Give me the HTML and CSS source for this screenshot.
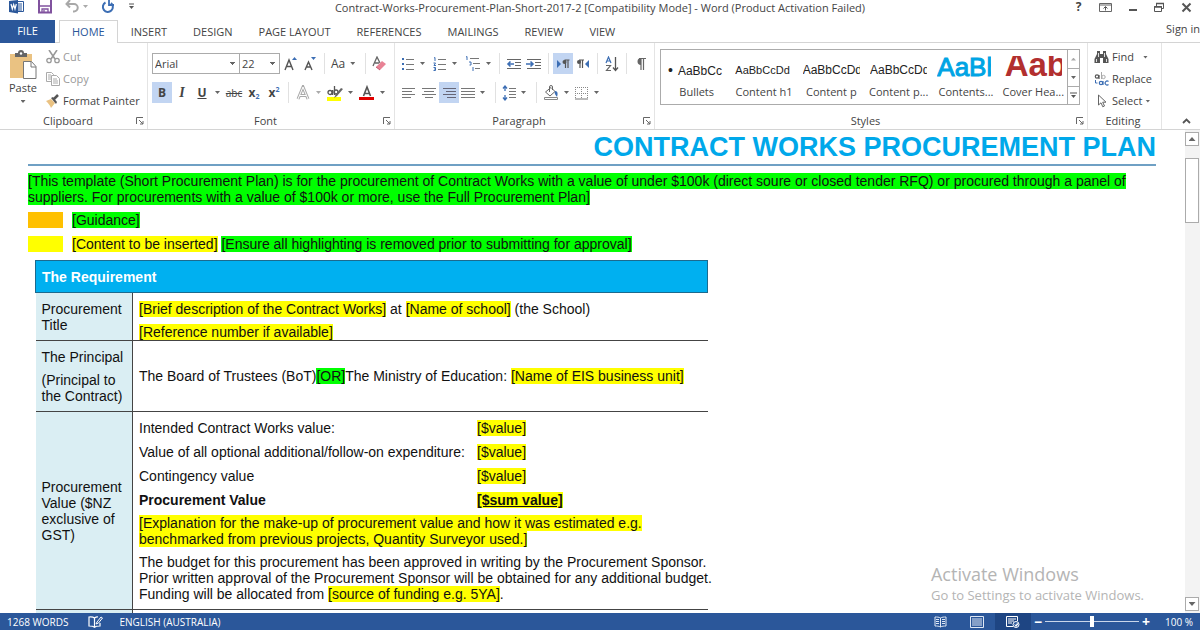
FILE: index.html
```html
<!DOCTYPE html>
<html lang="en">
<head>
<meta charset="UTF-8">
<meta name="viewport" content="width=device-width, initial-scale=1.0">
<title>Contract-Works-Procurement-Plan-Short-2017-2 - Word</title>
<link rel="stylesheet" href="styles.css">
</head>
<body>

<header class="titlebar">
  <div class="quick">
    <svg class="app-icon" width="16" height="14" viewBox="0 0 16 14"><path d="M8 1.500h6.500v10H8" fill="#fff" stroke="#2b579a"/><path d="M9 4h4M9 6h4M9 8h4M9 10h4" stroke="#2b579a"/><path d="M0 1l9-1v13.500L0 12z" fill="#2b579a"/><path d="M2 4l1.300 5L4.700 4.500 6 9l1.300-5" fill="none" stroke="#fff" stroke-width="1.200"/></svg>
    <button aria-label="Save"><svg width="14" height="14" viewBox="0 0 14 14"><path d="M1 0v12.500h12V0" fill="none" stroke="#80529e" stroke-width="2"/><path d="M2 6h10" stroke="#80529e" stroke-width="1.500"/><path d="M4 13V9h6v4M6 10v3" fill="none" stroke="#80529e" stroke-width="1.300"/></svg></button>
    <button class="has-caret off" aria-label="Undo"><svg width="14" height="14" viewBox="0 0 14 14"><path d="M5 0L1.500 4 5 7.500M2 4h7a3.500 3.500 0 0 1 0 7.500H8" fill="none" stroke="#a8a8a8" stroke-width="2"/></svg><i class="caret"></i></button>
    <button aria-label="Repeat"><svg width="14" height="14" viewBox="0 0 14 14"><path d="M4.500 2.500a5 5 0 1 0 5.500.500" fill="none" stroke="#3c6eb4" stroke-width="2"/><path d="M8 0v5h5" fill="none" stroke="#3c6eb4" stroke-width="1.800"/></svg></button>
    <button aria-label="Customize"><svg width="7" height="7" viewBox="0 0 7 7"><path d="M1 1h5" stroke="#555"/><path d="M1 3h5L3.500 6z" fill="#555"/></svg></button>
  </div>
  <h1 class="window-title">Contract-Works-Procurement-Plan-Short-2017-2 [Compatibility Mode] - Word (Product Activation Failed)</h1>
  <div class="window-buttons">
    <button class="help" aria-label="Help">?</button>
    <button aria-label="Ribbon options"><svg width="13" height="11" viewBox="0 0 13 11"><path d="M.5 1.500h12v8H.5zM.5 3h12" fill="none" stroke="#666"/><path d="M6.500 8.500V5M4.500 6.500l2-2 2 2" fill="none" stroke="#555"/></svg></button>
    <button aria-label="Minimize"><svg width="10" height="11" viewBox="0 0 10 11"><path d="M1 8h8" stroke="#555" stroke-width="2"/></svg></button>
    <button aria-label="Restore"><svg width="11" height="11" viewBox="0 0 11 11"><path d="M2.500 4V1.500h7v5H8M.5 4.500h7v5h-7z" fill="none" stroke="#555"/><path d="M2 1.500h8M0 5h8" stroke="#555" stroke-width="1.500"/></svg></button>
    <button aria-label="Close"><svg width="11" height="11" viewBox="0 0 11 11"><path d="M1.500 1.500l8 8M9.500 1.500l-8 8" stroke="#555" stroke-width="2"/></svg></button>
  </div>
</header>

<nav class="tabs">
  <a class="file" href="#file">FILE</a>
  <a class="tab active" href="#home">HOME</a>
  <a class="tab" href="#insert">INSERT</a>
  <a class="tab" href="#design">DESIGN</a>
  <a class="tab" href="#layout">PAGE LAYOUT</a>
  <a class="tab" href="#references">REFERENCES</a>
  <a class="tab" href="#mailings">MAILINGS</a>
  <a class="tab" href="#review">REVIEW</a>
  <a class="tab" href="#view">VIEW</a>
  <a class="signin" href="#signin">Sign in</a>
</nav>

<section class="ribbon">
  <div class="group">
    <div class="clipboard">
      <button class="paste">
        <svg width="28" height="30" viewBox="0 0 28 30"><path d="M1 4h22v24H1z" fill="#eac282"/><path d="M6 3h3a3 3 0 0 1 6 0h3v4H6z" fill="#666"/><circle cx="12" cy="3.500" r="1.200" fill="#fff"/><path d="M14.500 11.500h8l4.500 5v12H14.500z" fill="#fff" stroke="#777"/><path d="M22 12v5h5" fill="none" stroke="#777"/></svg>
        <span>Paste</span>
        <i class="caret"></i>
      </button>
      <div class="stack">
        <button class="cmd off"><svg width="14" height="14" viewBox="0 0 14 14"><path d="M3 0l6 9M11 0L5 9" stroke="#999" stroke-width="1.600"/><circle cx="3" cy="10.500" r="2.200" fill="none" stroke="#999" stroke-width="1.300"/><circle cx="11" cy="10.500" r="2.200" fill="none" stroke="#999" stroke-width="1.300"/></svg>Cut</button>
        <button class="cmd off"><svg width="14" height="14" viewBox="0 0 14 14"><path d="M.5.500h5l2 2v7h-7zM2 3h3M2 5h4M2 7h4" fill="#fff" stroke="#aaa"/><path d="M5.500 3.500h5l3 3v7h-8zM7 7h4M7 9h5M7 11h5" fill="#fff" stroke="#aaa"/></svg>Copy</button>
        <button class="cmd"><svg width="14" height="14" viewBox="0 0 14 14"><path d="M0 7l5-2 4 4-4 5c-1-3-3-5-5-7z" fill="#eac282"/><path d="M5 4l2-1 4 5-1 2z" fill="#555"/><path d="M8 5l4-4" stroke="#555" stroke-width="2.500"/></svg>Format Painter</button>
      </div>
    </div>
    <footer class="group-name"><span>Clipboard</span><svg class="launcher" width="8" height="8" viewBox="0 0 8 8"><path d="M.5 7V.500H7M3 3l4 4M7 4v3H4" fill="none" stroke="#666"/></svg></footer>
  </div>

  <div class="group">
    <div class="tools">
      <div class="row">
        <select class="font-name" aria-label="Font"><option>Arial</option></select>
        <select class="font-size" aria-label="Font size"><option>22</option></select>
        <button class="tool" aria-label="Grow font"><svg width="16" height="16" viewBox="0 0 16 16"><path d="M3 14L7 4l4 10M4.500 10.500h5" fill="none" stroke="#555" stroke-width="1.400"/><path d="M10 4h5l-2.500-3z" fill="#3c6eb4"/></svg></button>
        <button class="tool" aria-label="Shrink font"><svg width="16" height="16" viewBox="0 0 16 16"><path d="M3 14l3.500-8 3.500 8M4.500 11h4" fill="none" stroke="#555" stroke-width="1.400"/><path d="M9 1h5l-2.500 3z" fill="#3c6eb4"/></svg></button>
        <i class="sep"></i>
        <button class="tool drop" aria-label="Change case"><span class="aa">Aa</span><i class="caret"></i></button>
        <i class="sep"></i>
        <button class="tool" aria-label="Clear formatting"><svg width="16" height="16" viewBox="0 0 16 16"><path d="M1 10L5 1l3 6M3 7h4" fill="none" stroke="#666" stroke-width="1.300"/><path d="M4 11l6-6 4 3-6 6z" fill="#e88295"/><path d="M4 11l4 3" stroke="#c65a70"/></svg></button>
      </div>
      <div class="row">
        <button class="tool on bold">B</button>
        <button class="tool italic">I</button>
        <button class="tool drop under"><span>U</span><i class="caret"></i></button>
        <button class="tool strike">abc</button>
        <button class="tool script">x<sub>2</sub></button>
        <button class="tool script">x<sup>2</sup></button>
        <i class="sep"></i>
        <button class="tool drop off" aria-label="Text effects"><svg width="16" height="16" viewBox="0 0 16 16"><path d="M3 14L8 2l5 12M5 10.500h6" fill="none" stroke="#aaa" stroke-width="3"/><path d="M3 14L8 2l5 12M5 10.500h6" fill="none" stroke="#fff"/></svg><i class="caret"></i></button>
        <button class="tool drop" aria-label="Highlight"><svg width="16" height="16" viewBox="0 0 16 16"><path d="M0 12h14v4H0z" fill="#ff0"/><circle cx="3" cy="7.500" r="2" fill="none" stroke="#555" stroke-width="1.300"/><path d="M5.500 5v5M7.500 1v9" stroke="#555" stroke-width="1.300"/><circle cx="9" cy="7" r="2" fill="none" stroke="#555" stroke-width="1.300"/><path d="M7 13l2-4 5-6 2 1-6 7z" fill="#666"/></svg><i class="caret"></i></button>
        <button class="tool drop" aria-label="Font colour"><svg width="16" height="16" viewBox="0 0 16 16"><path d="M4.500 11L8 2l3.500 9M6 8.500h4" fill="none" stroke="#555" stroke-width="1.600"/><path d="M0 12h15v3H0z" fill="#e00000"/></svg><i class="caret"></i></button>
      </div>
    </div>
    <footer class="group-name"><span>Font</span><svg class="launcher" width="8" height="8" viewBox="0 0 8 8"><path d="M.5 7V.500H7M3 3l4 4M7 4v3H4" fill="none" stroke="#666"/></svg></footer>
  </div>

  <div class="group">
    <div class="tools">
      <div class="row">
        <button class="tool drop" aria-label="Bullets"><svg width="14" height="14" viewBox="0 0 14 14"><path d="M1 2h2M1 7h2M1 12h2" stroke="#3c6eb4" stroke-width="2"/><path d="M5 2.500h8M5 7.500h8M5 12.500h8" stroke="#777"/></svg><i class="caret"></i></button>
        <button class="tool drop" aria-label="Numbering"><svg width="14" height="14" viewBox="0 0 14 14"><path d="M1 1l1-.5V4M.5 6h2L1 8.500h2M.5 10.500h2v3h-2M1 12h1.500" fill="none" stroke="#3c6eb4"/><path d="M5 2.500h8M5 7.500h8M5 12.500h8" stroke="#777"/></svg><i class="caret"></i></button>
        <button class="tool drop" aria-label="Multilevel list"><svg width="16" height="16" viewBox="0 0 16 16"><path d="M1 1l1-.5V4M4 6h2v3H4.500M8 11v4" fill="none" stroke="#3c6eb4"/><path d="M5 2.500h9M8 7.500h7M10 12.500h5" stroke="#777"/></svg><i class="caret"></i></button>
        <i class="sep"></i>
        <button class="tool" aria-label="Decrease indent"><svg width="16" height="14" viewBox="0 0 16 14"><path d="M1 2.500h14M9 5.500h6M9 8.500h6M1 11.500h14" stroke="#666"/><path d="M8 7H2M4.500 4.500L2 7l2.500 2.500" fill="none" stroke="#3c6eb4" stroke-width="1.600"/></svg></button>
        <button class="tool" aria-label="Increase indent"><svg width="16" height="14" viewBox="0 0 16 14"><path d="M1 2.500h14M9 5.500h6M9 8.500h6M1 11.500h14" stroke="#666"/><path d="M0 7h7M4.500 4.500L7 7 4.500 9.500" fill="none" stroke="#3c6eb4" stroke-width="1.600"/></svg></button>
        <i class="sep"></i>
        <button class="tool on" aria-label="Left to right"><svg width="14" height="14" viewBox="0 0 14 14"><path d="M1 3l4 4-4 4z" fill="#3c6eb4"/><path d="M9.500 11V3M12 11V3M8.500 3h5" fill="none" stroke="#555" stroke-width="1.200"/><circle cx="8.500" cy="5" r="2" fill="#555"/></svg></button>
        <button class="tool" aria-label="Right to left"><svg width="14" height="14" viewBox="0 0 14 14"><path d="M13 3L9 7l4 4z" fill="#3c6eb4"/><path d="M4 11V3M6.500 11V3M3 3h5" fill="none" stroke="#555" stroke-width="1.200"/><circle cx="3" cy="5" r="2" fill="#555"/></svg></button>
        <i class="sep"></i>
        <button class="tool" aria-label="Sort"><svg width="14" height="16" viewBox="0 0 14 16"><path d="M1 7l2.500-6L6 7M2 5h3" fill="none" stroke="#3c6eb4" stroke-width="1.200"/><path d="M1 9.500h4.500L1.500 14.500H6" fill="none" stroke="#666" stroke-width="1.200"/><path d="M10.500 1v13M8 11.500l2.500 3 2.500-3" fill="none" stroke="#555" stroke-width="1.300"/></svg></button>
        <i class="sep"></i>
        <button class="tool" aria-label="Show marks"><svg width="12" height="14" viewBox="0 0 12 14"><path d="M6 13V1.500M8.500 13V1.500M4 1.500h7" fill="none" stroke="#666" stroke-width="1.200"/><path d="M6 1a3 3 0 0 0 0 7z" fill="#666"/></svg></button>
      </div>
      <div class="row">
        <button class="tool" aria-label="Align left"><svg width="14" height="14" viewBox="0 0 14 14"><path d="M0 2.500h13M0 5.500h10M0 8.500h13M0 11.500h9" stroke="#777"/></svg></button>
        <button class="tool" aria-label="Center"><svg width="14" height="14" viewBox="0 0 14 14"><path d="M0 2.500h14M2 5.500h10M0 8.500h14M3 11.500h8" stroke="#777"/></svg></button>
        <button class="tool on" aria-label="Align right"><svg width="14" height="14" viewBox="0 0 14 14"><path d="M1 2.500h13M4 5.500h10M1 8.500h13M5 11.500h9" stroke="#667"/></svg></button>
        <button class="tool drop" aria-label="Justify"><svg width="14" height="14" viewBox="0 0 14 14"><path d="M0 2.500h14M0 5.500h14M0 8.500h14M0 11.500h14" stroke="#777"/></svg><i class="caret"></i></button>
        <i class="sep"></i>
        <button class="tool drop" aria-label="Line spacing"><svg width="14" height="16" viewBox="0 0 14 16"><path d="M3 1v5M1 3.500L3 1l2 2.500M3 10v5M1 12.500L3 15l2-2.500" fill="none" stroke="#3c6eb4" stroke-width="1.300"/><path d="M7 3.500h7M7 6.500h7M7 9.500h7M7 12.500h7" stroke="#777"/></svg><i class="caret"></i></button>
        <i class="sep"></i>
        <button class="tool drop" aria-label="Shading"><svg width="16" height="16" viewBox="0 0 16 16"><path d="M2.500 7L8 2.500l4 4L7 11z" fill="#fff" stroke="#666"/><path d="M6.500 7V2a1.500 1.500 0 0 1 3 0v3" fill="none" stroke="#666"/><path d="M12 6c3 0 3 3 2 6-1-2-3-3-2-6z" fill="#3c6eb4"/><path d="M1.500 12.500h13v2h-13z" fill="#fff" stroke="#888"/></svg><i class="caret"></i></button>
        <button class="tool drop" aria-label="Borders"><svg width="14" height="14" viewBox="0 0 14 14"><path d="M0 1.500h13M.5 1v12M6.500 1v12M12.500 1v12M0 7.500h13" fill="none" stroke="#888" stroke-dasharray="1 1"/><path d="M0 13h13" stroke="#777"/></svg><i class="caret"></i></button>
      </div>
    </div>
    <footer class="group-name"><span>Paragraph</span><svg class="launcher" width="8" height="8" viewBox="0 0 8 8"><path d="M.5 7V.500H7M3 3l4 4M7 4v3H4" fill="none" stroke="#666"/></svg></footer>
  </div>

  <div class="group">
    <div class="gallery">
      <button class="style"><span class="sample bullet">AaBbCc</span><span>Bullets</span></button>
      <button class="style"><span class="sample small">AaBbCcDd</span><span>Content h1</span></button>
      <button class="style"><span class="sample">AaBbCcDd</span><span>Content p</span></button>
      <button class="style"><span class="sample">AaBbCcDd</span><span>Content p...</span></button>
      <button class="style"><span class="sample contents">AaBb</span><span>Contents...</span></button>
      <button class="style"><span class="sample cover">Aab</span><span>Cover Hea...</span></button>
      <div class="gallery-nav">
        <button class="off" aria-label="Up"><i class="caret up"></i></button>
        <button aria-label="Down"><i class="caret"></i></button>
        <button aria-label="More"><svg width="7" height="7" viewBox="0 0 7 7"><path d="M0 1h7" stroke="#555"/><path d="M1 3h5L3.500 6z" fill="#555"/></svg></button>
      </div>
    </div>
    <footer class="group-name"><span>Styles</span><svg class="launcher" width="8" height="8" viewBox="0 0 8 8"><path d="M.5 7V.500H7M3 3l4 4M7 4v3H4" fill="none" stroke="#666"/></svg></footer>
  </div>

  <div class="group">
    <div class="stack editing">
      <button class="cmd"><svg width="15" height="14" viewBox="0 0 15 14"><path d="M3 1h3v3h3V1h3v3l2.500 5v4H9V8H6v5H.5V9L3 4z" fill="#555"/><path d="M2.500 9v3M12.500 9v3M4.500 3v4M10.500 3v4" stroke="#ddd"/></svg>Find<i class="caret far"></i></button>
      <button class="cmd"><svg width="15" height="14" viewBox="0 0 15 14"><circle cx="3" cy="4.500" r="1.700" fill="none" stroke="#555" stroke-width="1.200"/><path d="M5 3v4" stroke="#555" stroke-width="1.200"/><path d="M7.500 0v7" stroke="#aaa"/><circle cx="9.500" cy="5" r="1.700" fill="none" stroke="#aaa"/><path d="M1.500 8v3h2" fill="none" stroke="#3c6eb4"/><circle cx="7" cy="11" r="1.700" fill="none" stroke="#3c6eb4" stroke-width="1.200"/><path d="M9 9v4M14.500 9.500a2 2 0 1 0 0 3" fill="none" stroke="#3c6eb4" stroke-width="1.200"/></svg>Replace</button>
      <button class="cmd"><svg width="15" height="14" viewBox="0 0 15 14"><path d="M4.500 1v10l2.500-2.200 1.800 4 1.700-.8-1.800-3.800H12z" fill="#fff" stroke="#666"/></svg>Select<i class="caret"></i></button>
    </div>
    <footer class="group-name"><span>Editing</span></footer>
  </div>

  <button class="collapse" aria-label="Collapse ribbon"><svg width="9" height="6" viewBox="0 0 9 6"><path d="M1 5l3.500-3.500L8 5" fill="none" stroke="#555" stroke-width="1.800"/></svg></button>
</section>

<main class="workspace">
  <article class="page">
    <h2>CONTRACT WORKS PROCUREMENT PLAN</h2>
    <p class="intro"><mark class="green">[This template (Short Procurement Plan) is for the procurement of Contract Works with a value of under $100k (direct soure or closed tender RFQ) or procured through a panel of suppliers. For procurements with a value of $100k or more, use the Full Procurement Plan]</mark></p>
    <p class="key"><i class="swatch orange"></i><mark class="green">[Guidance]</mark></p>
    <p class="key"><i class="swatch"></i><span><mark>[Content to be inserted]</mark> <mark class="green">[Ensure all highlighting is removed prior to submitting for approval]</mark></span></p>

    <table class="plan">
      <colgroup>
        <col class="label-col">
        <col>
      </colgroup>
      <thead>
        <tr><th colspan="2">The Requirement</th></tr>
      </thead>
      <tbody>
        <tr>
          <th scope="row" class="top">Procurement Title</th>
          <td>
            <p><mark>[Brief description of the Contract Works]</mark> at <mark>[Name of school]</mark> (the School)</p>
            <p><mark>[Reference number if available]</mark></p>
          </td>
        </tr>
        <tr>
          <th scope="row"><p>The Principal</p><p>(Principal to the Contract)</p></th>
          <td class="middle">The Board of Trustees (BoT)<mark class="green">[OR]</mark>The Ministry of Education: <mark>[Name of EIS business unit]</mark></td>
        </tr>
        <tr>
          <th scope="row">Procurement Value ($NZ exclusive of GST)</th>
          <td class="roomy">
            <dl class="values">
              <dt>Intended Contract Works value:</dt><dd><mark>[$value]</mark></dd>
              <dt>Value of all optional additional/follow-on expenditure:</dt><dd><mark>[$value]</mark></dd>
              <dt>Contingency value</dt><dd><mark>[$value]</mark></dd>
              <dt class="total">Procurement Value</dt><dd class="total"><mark>[$sum value]</mark></dd>
            </dl>
            <p><mark>[Explanation for the make-up of procurement value and how it was estimated e.g.<br>benchmarked from previous projects, Quantity Surveyor used.]</mark></p>
            <p class="budget">The budget for this procurement has been approved in writing by the Procurement Sponsor.<br>Prior written approval of the Procurement Sponsor will be obtained for any additional budget.<br>Funding will be allocated from <mark>[source of funding e.g. 5YA]</mark>.</p>
          </td>
        </tr>
        <tr><th scope="row"></th><td></td></tr>
      </tbody>
    </table>
  </article>

  <div class="scrollbar">
    <button aria-label="Scroll up"><i class="caret up"></i></button>
    <div class="thumb"></div>
    <button aria-label="Scroll down"><i class="caret"></i></button>
  </div>

  <div class="activate">
    <strong>Activate Windows</strong>
    <span>Go to Settings to activate Windows.</span>
  </div>
</main>

<footer class="statusbar">
  <span>1268 WORDS</span>
  <svg width="15" height="12" viewBox="0 0 15 12"><path d="M6.500 2C5 .8 3 .8 1 1v9c2 0 4 0 5.500 1.200C8 10 10 10 12 10V7M6.500 2v9M6.500 2C8 1 9 .8 10 1" fill="none" stroke="#fff" stroke-width="1.200"/><path d="M8 8l1-2 4-5 1.500 1-4 5z" fill="none" stroke="#fff"/></svg>
  <span>ENGLISH (AUSTRALIA)</span>
  <div class="views">
    <button aria-label="Read mode"><svg width="13" height="12" viewBox="0 0 13 12"><path d="M6.500 2C5 1 3 1 1 1v9c2 0 4 0 5.500 1C8 10 10 10 12 10V1c-2 0-4 0-5.500 1zM6.500 2v9M2 3.500h3M2 5.500h3M2 7.500h3M8 3.500h3M8 5.500h3M8 7.500h3" fill="none" stroke="#dfe8f5"/></svg></button>
    <button aria-label="Print layout"><svg width="14" height="12" viewBox="0 0 14 12"><path d="M.5.500h13v11H.5zM2 3h10M2 5h10M2 7h10M2 9h10" fill="none" stroke="#dfe8f5"/></svg></button>
    <button class="current" aria-label="Web layout"><svg width="14" height="12" viewBox="0 0 14 12"><path d="M7 10.500H.5V.500h11V5M2 3h8M2 5h6M2 7h4" fill="none" stroke="#fff"/><circle cx="10" cy="8.500" r="3" fill="#2b579a" stroke="#fff"/><path d="M8 8l2 1 1-2 1.500 1L10 11z" fill="#fff"/></svg></button>
  </div>
  <div class="zoom">
    <button aria-label="Zoom out">−</button>
    <input type="range" min="0" max="100" value="50" aria-label="Zoom">
    <button aria-label="Zoom in">+</button>
  </div>
  <span class="percent">100 %</span>
</footer>

</body>
</html>
```
FILE: styles.css
```css
* {
    box-sizing: border-box;
}

body {
    margin: 0;
    height: 100vh;
    display: flex;
    flex-direction: column;
    overflow: hidden;
    background-color: #fff;
    color: #444;
    font-family: "Open Sans", "Noto Sans", sans-serif;
    font-size: 11px;
    line-height: 16px;
}

button {
    display: flex;
    align-items: center;
    justify-content: center;
    margin: 0;
    padding: 0;
    border: none;
    background: none;
    color: inherit;
    font: inherit;
}

a {
    color: inherit;
    text-decoration: none;
}

p, dl, dd {
    margin: 0;
}

svg {
    flex: none;
}

.caret {
    flex: none;
    width: 5px;
    height: 3px;
    background-color: #666;
    clip-path: polygon(0 0, 100% 0, 50% 100%);
}

.caret.up {
    clip-path: polygon(50% 0, 100% 100%, 0 100%);
}

.off {
    color: #999;
}

.off .caret {
    background-color: #aaa;
}

/* title bar */
.titlebar {
    display: grid;
    grid-template-columns: 1fr auto 1fr;
    height: 20px;
}

.quick {
    display: flex;
    align-items: flex-start;
    gap: 13px;
    padding-left: 9px;
}

.quick button {
    height: 13px;
}

.quick .has-caret {
    gap: 4px;
}

.window-title {
    margin: 0;
    font-size: 11px;
    font-weight: normal;
    line-height: 16px;
}

.window-buttons {
    display: flex;
    justify-content: flex-end;
}

.window-buttons button {
    width: 27px;
    height: 14px;
}

.window-buttons .help {
    font-size: 12px;
    font-weight: bold;
}

/* tabs */
.tabs {
    display: flex;
    height: 23px;
    line-height: 22px;
    border-bottom: 1px solid #d4d4d4;
}

.file {
    width: 55px;
    height: 23px;
    margin-right: 4px;
    background-color: #2b579a;
    color: #fff;
    text-align: center;
}

.tab {
    padding: 0 12px;
    border: 1px solid transparent;
    border-bottom: none;
}

.tab.active {
    height: 23px;
    border-color: #d4d4d4;
    background-color: #fff;
    color: #2b579a;
}

.signin {
    margin-left: auto;
    line-height: 18px;
}

/* ribbon */
.ribbon {
    display: grid;
    grid-template-columns: 148px 247px 260px 1fr 74px 38px;
    height: 87px;
    border-bottom: 1px solid #d4d4d4;
}

.group {
    display: flex;
    flex-direction: column;
    justify-content: space-between;
    min-width: 0;
    padding-top: 3px;
    border-right: 1px solid #e4e4e4;
}

.group-name {
    display: flex;
    align-items: center;
    padding-right: 3px;
}

.group-name span {
    flex: 1;
    text-align: center;
}

.clipboard {
    display: flex;
}

.paste {
    width: 46px;
    flex-direction: column;
    justify-content: flex-start;
    padding-top: 4px;
}

.paste .caret {
    margin-top: 4px;
}

.stack {
    display: flex;
    flex-direction: column;
}

.cmd {
    justify-content: flex-start;
    gap: 3px;
    height: 22px;
}

.cmd .far {
    margin-left: 6px;
}

.editing {
    padding-left: 6px;
}

.tools {
    display: flex;
    flex-direction: column;
    gap: 8px;
    padding: 7px 0 0 4px;
}

.row {
    display: flex;
    height: 21px;
}

.tool {
    width: 20px;
    flex: none;
}

.tool.drop {
    width: 32px;
    justify-content: flex-start;
    gap: 5px;
    padding-left: 2px;
}

.tool.on {
    background-color: #c2d5f2;
}

.sep {
    width: 1px;
    margin: 0 4px;
    background-color: #e1e1e1;
}

/* the arrow is three stacked lines */
.font-name, .font-size {
    appearance: none;
    width: 88px;
    padding: 0 2px;
    border: 1px solid #ababab;
    border-radius: 0;
    background: linear-gradient(#666, #666) right 4px top 8px / 5px 1px no-repeat,
                linear-gradient(#666, #666) right 5px top 9px / 3px 1px no-repeat,
                linear-gradient(#666, #666) right 6px top 10px / 1px 1px no-repeat;
    color: #444;
    font: inherit;
}

.font-size {
    width: 41px;
    margin-left: -1px;
}

.aa {
    font-size: 12px;
}

.bold {
    font-weight: bold;
    font-size: 12px;
}

.italic {
    font-family: "Liberation Serif", serif;
    font-style: italic;
    font-weight: bold;
    font-size: 14px;
}

.under span {
    width: 16px;
    font-weight: bold;
    font-size: 12px;
    text-decoration: underline;
}

.strike {
    font-size: 10px;
    text-decoration: line-through;
}

.script {
    font-weight: bold;
    font-size: 12px;
}

.script sub, .script sup {
    font-size: 7px;
    line-height: 7px;
    color: #3c6eb4;
}

.script sub {
    align-self: flex-end;
    margin-bottom: 3px;
}

.script sup {
    align-self: flex-start;
    margin-top: 4px;
}

.gallery {
    display: flex;
    height: 56px;
    margin: 3px 7px 0 5px;
    padding-left: 2px;
    border: 1px solid #ababab;
}

.style {
    flex: 1;
    min-width: 0;
    flex-direction: column;
    justify-content: flex-end;
    padding: 0 5px 4px;
    overflow: hidden;
    white-space: nowrap;
}

.sample {
    width: 100%;
    height: 36px;
    overflow: hidden;
    color: #222;
    font-family: "Liberation Sans", Arial, sans-serif;
    font-size: 12px;
    line-height: 40px;
    text-align: left;
}

.sample.small {
    font-size: 11px;
}

.sample.bullet::before {
    content: "•";
    margin-right: 5px;
    font-size: 14px;
}

.sample.contents {
    width: 54px;
    align-self: flex-start;
    color: #00a4e4;
    font-size: 26px;
    line-height: 34px;
    -webkit-text-stroke: 1px #00a4e4;
}

/* tall sample, its top is cut by the row */
.sample.cover {
    height: 21px;
    margin-bottom: 7px;
    color: #b22f2f;
    font-size: 33px;
    font-weight: bold;
    line-height: 17px;
}

.gallery-nav {
    width: 12px;
    display: grid;
    grid-template-rows: 1fr 1fr 1fr;
    border-left: 1px solid #ababab;
}

.gallery-nav button + button {
    border-top: 1px solid #ababab;
}

.collapse {
    align-self: end;
    justify-self: center;
    width: 20px;
    height: 16px;
    margin-left: 10px;
}

/* document */
.workspace {
    position: relative;
    flex: 1;
    min-height: 0;
    display: flex;
    overflow: hidden;
}

.page {
    flex: 1;
    padding: 0 29px 0 28px;
    color: #111;
    font-family: "Liberation Sans", Arial, sans-serif;
    font-size: 14px;
    line-height: 16px;
}

.page h2 {
    margin: 0 0 7px;
    height: 36px;
    border-bottom: 2px solid #6fa0c4;
    color: #00a8ea;
    font-size: 27px;
    line-height: 34px;
    text-align: right;
}

mark {
    background-color: #ff0;
    color: inherit;
}

mark.green {
    background-color: #0f0;
}

.intro {
    margin-bottom: 7px;
}

.key {
    display: flex;
    gap: 9px;
    margin-bottom: 8px;
}

.swatch {
    width: 35px;
    height: 16px;
    background-color: #ff0;
}

.swatch.orange {
    background-color: #ffc000;
}

.plan {
    width: 673px;
    margin-left: 7px;
    border-collapse: collapse;
    table-layout: fixed;
}

.label-col {
    width: 97px;
}

.plan thead th {
    height: 32px;
    padding: 0 6px;
    border: 1px solid #1c6a8e;
    background-color: #00b0f0;
    color: #fff;
    text-align: left;
}

.plan tbody th {
    padding: 8px 6px 7px;
    border-right: 1px solid #444;
    border-bottom: 1px solid #444;
    background-color: #daeef3;
    font-weight: normal;
    text-align: left;
}

.plan tbody th.top {
    vertical-align: top;
}

.plan td {
    padding: 8px 0 0 6px;
    border-bottom: 1px solid #444;
}

.plan td.middle {
    padding: 0 0 0 6px;
}

.plan td.roomy {
    padding-bottom: 7px;
}

.plan p + p {
    margin-top: 7px;
}

.budget {
    white-space: nowrap;
}

.values {
    display: grid;
    grid-template-columns: 338px 1fr;
    row-gap: 8px;
    margin-bottom: 7px;
}

.total {
    font-weight: bold;
}

dd.total {
    text-decoration: underline;
}

.scrollbar {
    display: flex;
    flex-direction: column;
    width: 15px;
    padding: 2px 1px 2px 0;
    background-color: #f3f3f3;
}

.scrollbar button {
    height: 14px;
    border: 1px solid #ababab;
    background-color: #fff;
}

.scrollbar .caret {
    width: 7px;
    height: 4px;
}

.thumb {
    height: 65px;
    margin: 12px 0 auto;
    border: 1px solid #ababab;
    background-color: #fff;
}

.activate {
    position: absolute;
    right: 56px;
    bottom: 8px;
    display: flex;
    flex-direction: column;
    color: #b4b4b4;
    font-size: 13px;
    line-height: 20px;
}

.activate strong {
    font-size: 18px;
    font-weight: normal;
    line-height: 22px;
}

/* status bar */
.statusbar {
    display: flex;
    align-items: center;
    height: 17px;
    padding: 0 7px;
    background-color: #2b579a;
    color: #fff;
    font-size: 10px;
}

.statusbar svg {
    margin: 0 16px 0 20px;
}

.views {
    display: flex;
    margin-left: auto;
}

.views button {
    width: 36px;
    height: 17px;
}

.views .current {
    background-color: #1e4583;
}

.statusbar .views svg {
    margin: 0;
}

.zoom {
    display: flex;
    align-items: center;
    gap: 2px;
    margin: 0 14px 0 2px;
}

.zoom button {
    width: 10px;
    height: 16px;
    font-size: 14px;
    font-weight: bold;
}

.zoom input {
    appearance: none;
    width: 94px;
    height: 12px;
    margin: 0;
    background: linear-gradient(#c9d6ea, #c9d6ea) center / 100% 1px no-repeat;
}

.zoom input::-webkit-slider-thumb {
    appearance: none;
    width: 4px;
    height: 11px;
    background-color: #fff;
}
```
